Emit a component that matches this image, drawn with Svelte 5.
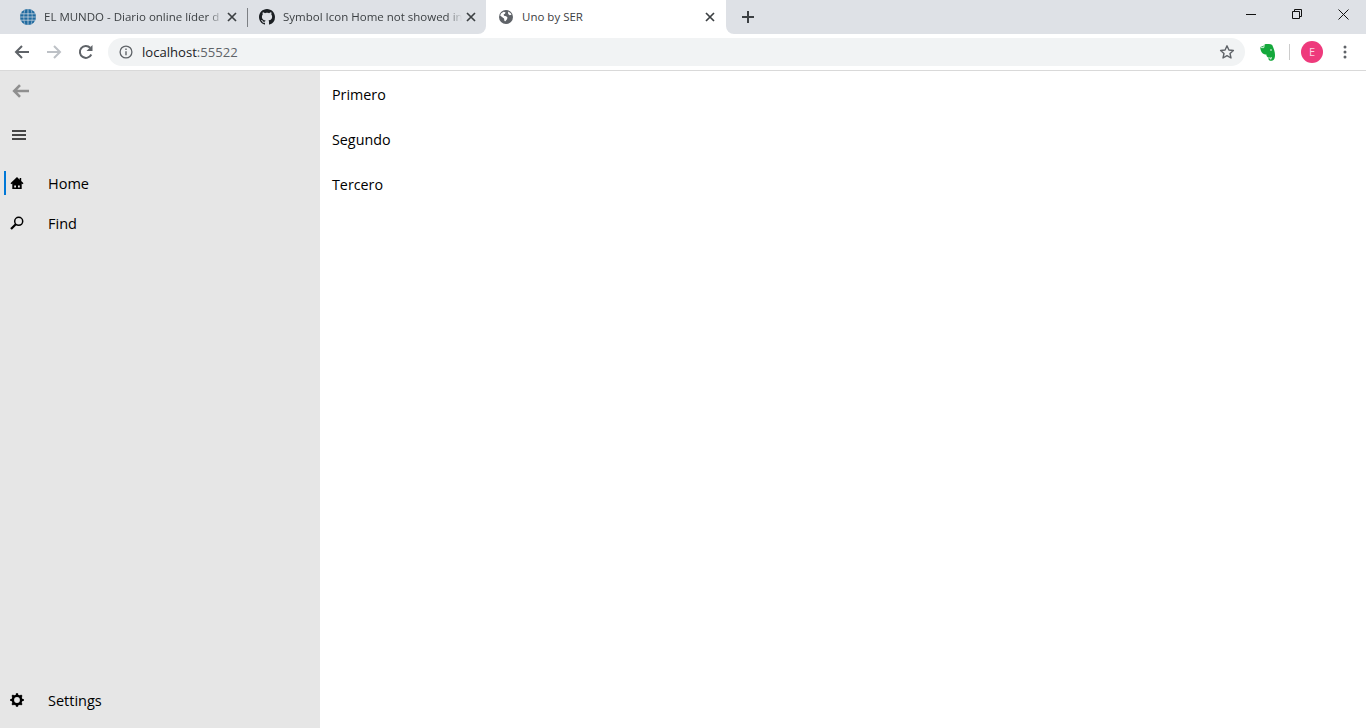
<script>
  const tabs = [
    { title: 'EL MUNDO - Diario online líder d', icon: 'globe' },
    { title: 'Symbol Icon Home not showed in', icon: 'github' }
  ];
  const items = ['Primero', 'Segundo', 'Tercero'];
</script>

<div class="window">
  <header class="strip">
    <div class="inactive">
      {#each tabs as tab, i}
        <div class="tab" class:sep={i === 0}>
          {#if tab.icon === 'globe'}
            <svg class="fav" viewBox="0 0 16 16" width="16" height="16">
              <circle cx="8" cy="8" r="8" fill="#1f6a9f" />
              <path d="M1 4.800h14M0 8h16M1 11.200h14M8 0v16" stroke="#dee1e6" stroke-width=".7" fill="none" />
              <path d="M4.800 1c-1.400 4.500-1.400 9.500 0 14M11.200 1c1.400 4.500 1.400 9.500 0 14" stroke="#dee1e6" stroke-width=".5" fill="none" />
            </svg>
          {:else}
            <svg class="fav" viewBox="0 0 16 16" width="16" height="16">
              <path fill="#1b1f23" d="M8 0C3.580 0 0 3.580 0 8c0 3.540 2.290 6.530 5.470 7.590.4.070.55-.17.55-.38 0-.19-.01-.82-.01-1.490-2.010.37-2.530-.49-2.690-.94-.09-.23-.48-.94-.82-1.130-.28-.15-.68-.52-.01-.53.63-.01 1.080.58 1.230.82.720 1.210 1.870.87 2.330.66.070-.52.280-.87.510-1.070-1.780-.2-3.640-.89-3.640-3.950 0-.87.310-1.590.820-2.150-.08-.2-.36-1.020.08-2.120 0 0 .67-.21 2.200.82.640-.18 1.320-.27 2-.27s1.360.09 2 .27c1.530-1.040 2.200-.82 2.200-.82.440 1.100.160 1.920.080 2.120.510.560.820 1.270.820 2.150 0 3.070-1.870 3.750-3.650 3.950.290.250.540.730.540 1.480 0 1.070-.01 1.930-.01 2.200 0 .210.150.460.550.380A8.010 8.010 0 0 0 16 8c0-4.420-3.580-8-8-8z" />
            </svg>
          {/if}
          <span class="title">{tab.title}</span>
          <svg class="close" viewBox="0 0 10 10" width="10" height="10"><path d="M1 1l8 8M9 1l-8 8" stroke="#3c4043" stroke-width="1.700" /></svg>
        </div>
      {/each}
    </div>
    <div class="tab active">
      <svg class="fav" viewBox="0 0 16 16" width="16" height="16">
        <circle cx="8" cy="8" r="7" fill="#5f6368" />
        <path fill="#fff" d="M3 4.500l2.500-1.800 2 .6-.5 1.400-1.300.6.300 1.500 2.200.5 1.300 1.300-.5 1.600-1.600 2-.9-.3-.5-2.500-2-1.500-1.800-1.500zM10 2.500l2.500 1.500 1 1.800-1.800.5-1.500-1.300z" />
      </svg>
      <span class="title">Uno by SER</span>
      <svg class="close" viewBox="0 0 10 10" width="10" height="10"><path d="M1 1l8 8M9 1l-8 8" stroke="#3c4043" stroke-width="1.700" /></svg>
    </div>
    <div class="rest">
      <svg class="plus" viewBox="0 0 12 12" width="12" height="12"><path d="M6 0v12M0 6h12" stroke="#3c4043" stroke-width="2" /></svg>
      <div class="winctl">
        <svg viewBox="0 0 10 10" width="10" height="10"><path d="M0 5.500h10" stroke="#111" /></svg>
        <svg viewBox="0 0 10 10" width="10" height="10"><path d="M.5 2.500h7v7h-7zM2.500 2.500v-2h7v7h-2" stroke="#111" fill="none" /></svg>
        <svg viewBox="0 0 11 11" width="11" height="11"><path d="M.5 .5l10 10M10.500 .5l-10 10" stroke="#111" /></svg>
      </div>
    </div>
  </header>

  <div class="toolbar">
    <svg class="nav" viewBox="0 0 16 16" width="16" height="16"><path d="M15 8H2M8 2L2 8l6 6" stroke="#5f6368" stroke-width="2" fill="none" /></svg>
    <svg class="nav" viewBox="0 0 16 16" width="16" height="16"><path d="M1 8h13M8 2l6 6-6 6" stroke="#bdc1c6" stroke-width="2" fill="none" /></svg>
    <svg class="nav" viewBox="0 0 16 16" width="16" height="16"><path d="M13.300 10.500A6 6 0 1 1 12.200 3.700" stroke="#5f6368" stroke-width="2" fill="none" /><path d="M14.500 1v6h-6z" fill="#5f6368" /></svg>
    <div class="omnibox">
      <svg class="info" viewBox="0 0 14 14" width="14" height="14">
        <circle cx="7" cy="7" r="5.900" stroke="#5f6368" stroke-width="1.300" fill="none" />
        <path d="M7 6.200v4" stroke="#5f6368" stroke-width="1.400" /><path d="M7 3.500v1.500" stroke="#5f6368" stroke-width="1.400" />
      </svg>
      <span class="url">localhost<span class="port">:55522</span></span>
      <svg class="star" viewBox="0 0 16 16" width="16" height="16"><path d="M8 1.800l1.900 4.200 4.500.5-3.400 3 1 4.500L8 11.700 4 14l1-4.500-3.400-3 4.500-.5z" stroke="#5f6368" stroke-width="1.400" fill="none" stroke-linejoin="round" /></svg>
    </div>
    <svg class="ever" viewBox="0 0 16 17" width="16" height="17">
      <path fill="#14a83b" d="M3 2L5 .2C8-.3 11 0 12.200 1 13.700 4 15 8 15 11c0 3-.6 5-3 5.700-2.500.4-4-1.200-3.500-2.900C6.500 13 6.300 11.200 6.400 10.500 5 10.500 2.500 10 1.500 8 .6 6 .2 4.500.3 3z" />
      <path d="M4.200 .8L3.800 3.600H.6" stroke="#fff" stroke-width=".8" fill="none" />
      <circle cx="11" cy="6" r=".8" fill="#fff" />
      <path d="M8.500 13.800c1.200.4 2.500.3 3.300.1-1.200 0-1.800 1-1 1.700" stroke="#fff" stroke-width=".8" fill="none" />
    </svg>
    <div class="divider"></div>
    <div class="avatar">E</div>
    <svg class="menu" viewBox="0 0 4 14" width="4" height="14"><circle cx="2" cy="2" r="1.500" /><circle cx="2" cy="7" r="1.500" /><circle cx="2" cy="12" r="1.500" /></svg>
  </div>

  <div class="app">
    <aside class="pane">
      <div class="back">
        <svg viewBox="0 0 17 14" width="17" height="14"><path d="M17 7H2.500M8 1.200L2.200 7 8 12.800" stroke="#8f8f8f" stroke-width="2.600" fill="none" /></svg>
      </div>
      <div class="burger">
        <svg viewBox="0 0 14 10" width="14" height="10"><path d="M0 1h14M0 5h14M0 9h14" stroke="#111" stroke-width="1.400" /></svg>
      </div>
      <div class="nav-item selected">
        <svg viewBox="0 0 14 14" width="14" height="14"><path fill="#000" fill-rule="evenodd" d="M7 1L.5 7.300l1 .9.800-.7V13h9.400V7.500l.8.700 1-.9-2.300-2.200V2h-1.500v1.700zM4.200 9.500V11.500H6V9.500zM8 9.500V11.500H9.800V9.500z" /></svg>
        <span>Home</span>
      </div>
      <div class="nav-item">
        <svg viewBox="0 0 14 14" width="14" height="14"><circle cx="8.700" cy="5.300" r="4" stroke="#000" stroke-width="1.500" fill="none" /><path d="M5.800 8.200L1 13" stroke="#000" stroke-width="2.200" /></svg>
        <span>Find</span>
      </div>
      <div class="nav-item bottom">
        <svg viewBox="0 0 14 14" width="14" height="14"><circle cx="7" cy="7" r="4.200" stroke="#000" stroke-width="2.600" fill="none" /><path d="M7 .2v2.500M7 11.300v2.500M.2 7h2.500M11.300 7h2.500M2.200 2.200L4 4M10 10l1.800 1.800M11.800 2.200L10 4M4 10l-1.800 1.800" stroke="#000" stroke-width="2.200" /></svg>
        <span>Settings</span>
      </div>
    </aside>
    <main class="content">
      {#each items as item}
        <p>{item}</p>
      {/each}
    </main>
  </div>
</div>

<style>
  :global(body) { margin: 0; overflow: hidden; }
  .window {
    width: 1366px;
    height: 728px;
    display: flex;
    flex-direction: column;
    font-family: "Open Sans", "Noto Sans", sans-serif;
    background: #fff;
    color: #000;
  }
  .strip {
    height: 34px;
    display: flex;
    flex: none;
    background: #fff;
  }
  .inactive {
    width: 486px;
    box-sizing: border-box;
    padding-left: 8px;
    background: #dee1e6;
    border-bottom-right-radius: 8px;
    display: flex;
  }
  .tab {
    width: 238px;
    height: 34px;
    box-sizing: border-box;
    padding: 0 10px 0 11px;
    display: flex;
    align-items: center;
    position: relative;
    flex: none;
  }
  .tab.sep {
    width: 240px;
    padding: 0 11px 0 12px;
  }
  .tab.sep::after {
    content: "";
    position: absolute;
    right: 0;
    top: 8px;
    height: 19px;
    width: 1px;
    background: #7d8084;
  }
  .tab.active {
    width: 240px;
    padding-left: 12px;
    padding-right: 11px;
    background: #fff;
    border-radius: 8px 8px 0 0;
  }
  .fav { flex: none; margin-right: 8px; }
  .title {
    flex: 1;
    min-width: 0;
    white-space: nowrap;
    overflow: hidden;
    font-size: 11.500px;
    line-height: 16px;
    padding-bottom: 1px;
    color: #3c4043;
    mask-image: linear-gradient(to right, #000 calc(100% - 19px), transparent calc(100% - 4px));
  }
  .active .title { mask-image: none; }
  .close { flex: none; }
  .rest {
    flex: 1;
    background: #dee1e6;
    border-bottom-left-radius: 8px;
    display: flex;
    align-items: center;
    padding-left: 16px;
  }
  .plus { flex: none; }
  .winctl {
    margin-left: auto;
    display: flex;
    align-items: center;
    gap: 36px;
    padding-right: 17px;
    padding-bottom: 6px;
  }
  .toolbar {
    height: 36px;
    flex: none;
    border-bottom: 1px solid #d9d9d9;
    background: #fff;
    display: flex;
    align-items: center;
    padding-left: 14px;
  }
  .nav { margin-right: 16px; flex: none; }
  .omnibox {
    width: 1137px;
    height: 28px;
    margin-left: -2px;
    background: #f1f3f4;
    border-radius: 14px;
    display: flex;
    align-items: center;
    padding: 0 10px 0 11px;
    box-sizing: border-box;
    flex: none;
  }
  .info { flex: none; margin-right: 9px; }
  .url { flex: 1; font-size: 13.100px; color: #202124; }
  .port { color: #5f6368; }
  .star { flex: none; }
  .ever { flex: none; margin-left: 15px; }
  .divider { width: 1px; height: 16px; background: #ccc; margin-left: 13px; flex: none; }
  .avatar {
    width: 22px;
    height: 22px;
    border-radius: 50%;
    background: #ee3a7c;
    color: #fbd5e3;
    font-size: 11px;
    line-height: 22px;
    text-align: center;
    margin-left: 11px;
    flex: none;
  }
  .menu { fill: #5f6368; margin-left: 20px; flex: none; }
  .app { flex: 1; display: flex; min-height: 0; }
  .pane {
    width: 320px;
    flex: none;
    background: #e6e6e6;
    display: flex;
    flex-direction: column;
    padding-bottom: 8px;
    box-sizing: border-box;
  }
  .back { height: 40px; display: flex; align-items: center; padding-left: 12px; }
  .burger { height: 48px; display: flex; align-items: center; padding-left: 12px; margin-bottom: 4px; }
  .nav-item {
    height: 40px;
    display: flex;
    align-items: center;
    padding-left: 10px;
    position: relative;
    font-size: 14.500px;
  }
  .nav-item span { margin-left: 24px; }
  .nav-item.selected::before {
    content: "";
    position: absolute;
    left: 4px;
    top: 8px;
    height: 24px;
    width: 2px;
    background: #0078d7;
  }
  .bottom { margin-top: auto; }
  .content { flex: 1; padding: 14px 12px; }
  .content p {
    margin: 0 0 25px;
    height: 20px;
    line-height: 20px;
    font-size: 14.300px;
  }
</style>
